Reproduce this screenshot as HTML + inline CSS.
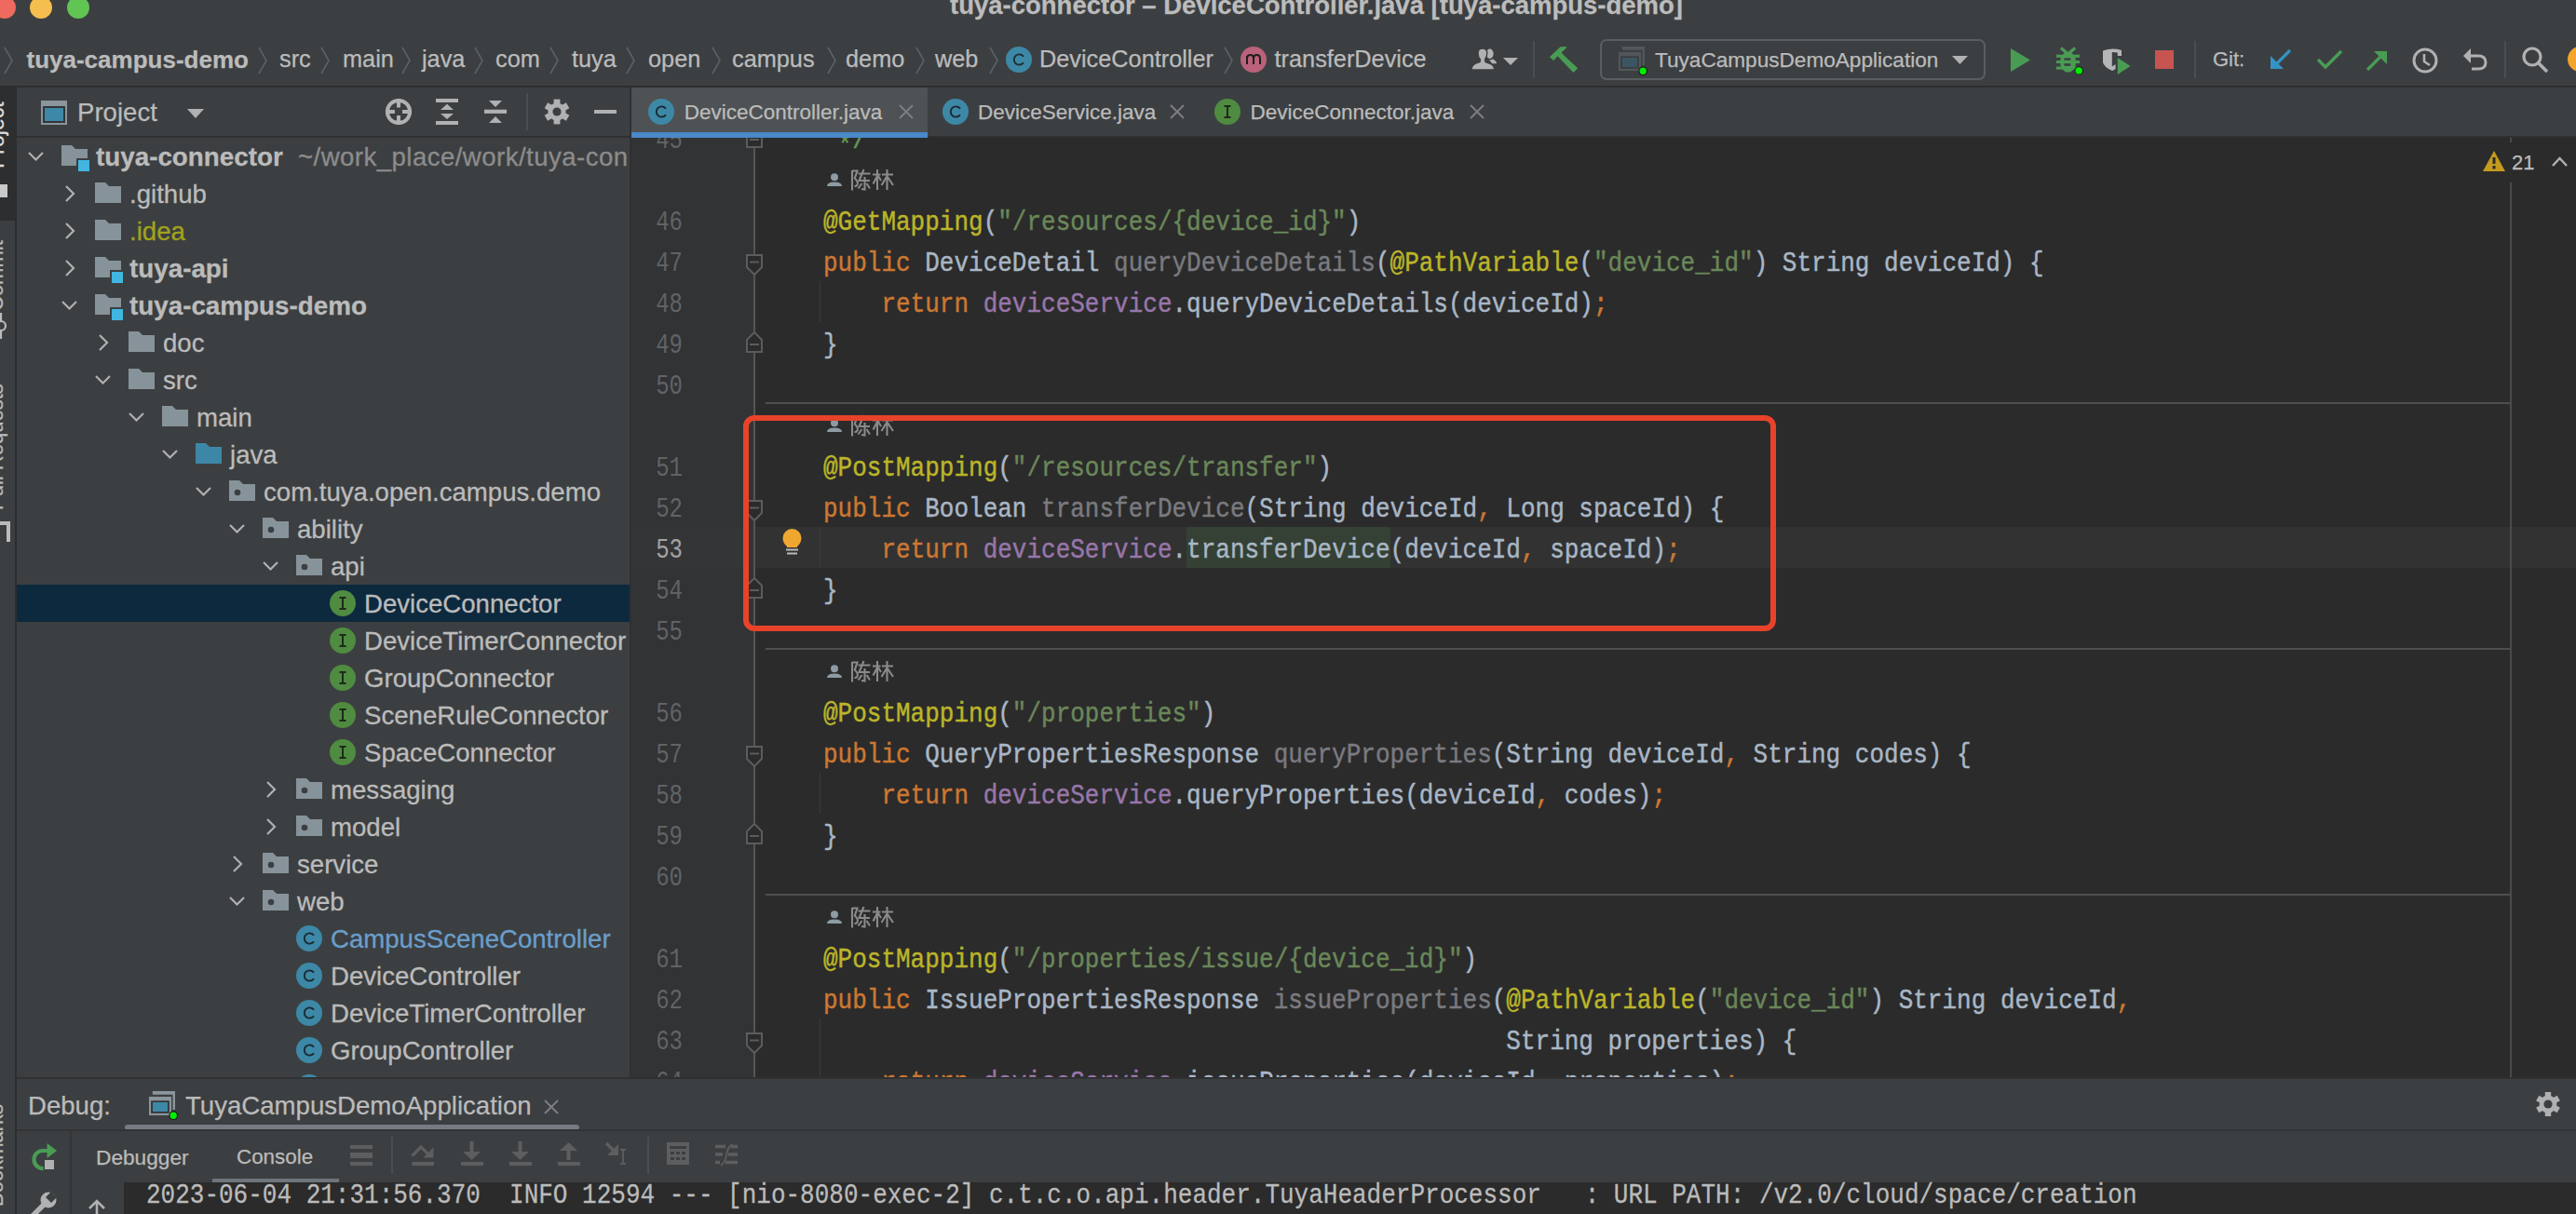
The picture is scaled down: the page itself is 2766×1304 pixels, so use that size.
<!DOCTYPE html><html><head><meta charset="utf-8"><title>IDE</title><style>
*{margin:0;padding:0;box-sizing:border-box}
html,body{width:2766px;height:1304px;overflow:hidden;background:#3c3f41}
body{position:relative;font-family:"Liberation Sans",sans-serif;color:#bbbbbb}
.ab{position:absolute}
.t{position:absolute;white-space:pre;line-height:1;-webkit-text-stroke:0.25px currentColor}
.mono{font-family:"Liberation Mono",monospace}
svg{position:absolute;overflow:visible}
.row{position:absolute;left:0;height:44px;line-height:44px;white-space:pre;font-family:"Liberation Mono",monospace;font-size:26px;color:#a9b7c6;transform:scaleY(1.12);transform-origin:0 12px;-webkit-text-stroke:0.4px currentColor}
.k{color:#cc7832}.s{color:#6a8759}.an{color:#bbb529}.f{color:#9876aa}.u{color:#7a7a80}.cm{color:#629755}
.ln{position:absolute;left:677px;width:55px;text-align:right;font-family:"Liberation Mono",monospace;font-size:24px;color:#606366;height:44px;line-height:44px;transform:scaleY(1.2);transform-origin:0 12px}
.tr{position:absolute;height:40px;line-height:40px;white-space:pre;font-size:27.6px;color:#bbbbbb;-webkit-text-stroke:0.3px currentColor}
</style></head><body>
<div class="ab" style="left:0;top:0;width:2766px;height:92px;background:#3c3f41"></div>
<div class="ab" style="left:-7px;top:-4px;width:24px;height:24px;border-radius:50%;background:#ee6a5f"></div>
<div class="ab" style="left:32px;top:-4px;width:24px;height:24px;border-radius:50%;background:#f5be4f"></div>
<div class="ab" style="left:72px;top:-4px;width:24px;height:24px;border-radius:50%;background:#61c554"></div>
<div class="t" style="left:1020px;top:-8px;font-size:27.5px;font-weight:bold;color:#bcbcbc">tuya-connector – DeviceController.java [tuya-campus-demo]</div>
<div class="ab" style="left:0;top:92px;width:2766px;height:2px;background:#2c2d2f"></div>
<svg style="left:4px;top:50px" width="10" height="30"><path d="M1 1 L9 15 L1 29" fill="none" stroke="#5b6166" stroke-width="1.6"/></svg>
<div class="t" style="left:28.5px;top:51px;font-size:26px;font-weight:bold;color:#bbbbbb">tuya-campus-demo</div>
<svg style="left:277px;top:50px" width="10" height="30"><path d="M1 1 L9 15 L1 29" fill="none" stroke="#5b6166" stroke-width="1.6"/></svg>
<div class="t" style="left:300px;top:51px;font-size:25.3px;color:#bbbbbb">src</div>
<svg style="left:344px;top:50px" width="10" height="30"><path d="M1 1 L9 15 L1 29" fill="none" stroke="#5b6166" stroke-width="1.6"/></svg>
<div class="t" style="left:368px;top:51px;font-size:25.3px;color:#bbbbbb">main</div>
<svg style="left:431px;top:50px" width="10" height="30"><path d="M1 1 L9 15 L1 29" fill="none" stroke="#5b6166" stroke-width="1.6"/></svg>
<div class="t" style="left:453px;top:51px;font-size:25.3px;color:#bbbbbb">java</div>
<svg style="left:509px;top:50px" width="10" height="30"><path d="M1 1 L9 15 L1 29" fill="none" stroke="#5b6166" stroke-width="1.6"/></svg>
<div class="t" style="left:532px;top:51px;font-size:25.3px;color:#bbbbbb">com</div>
<svg style="left:590px;top:50px" width="10" height="30"><path d="M1 1 L9 15 L1 29" fill="none" stroke="#5b6166" stroke-width="1.6"/></svg>
<div class="t" style="left:614px;top:51px;font-size:25.3px;color:#bbbbbb">tuya</div>
<svg style="left:672px;top:50px" width="10" height="30"><path d="M1 1 L9 15 L1 29" fill="none" stroke="#5b6166" stroke-width="1.6"/></svg>
<div class="t" style="left:696px;top:51px;font-size:25.3px;color:#bbbbbb">open</div>
<svg style="left:764px;top:50px" width="10" height="30"><path d="M1 1 L9 15 L1 29" fill="none" stroke="#5b6166" stroke-width="1.6"/></svg>
<div class="t" style="left:786px;top:51px;font-size:25.3px;color:#bbbbbb">campus</div>
<svg style="left:888px;top:50px" width="10" height="30"><path d="M1 1 L9 15 L1 29" fill="none" stroke="#5b6166" stroke-width="1.6"/></svg>
<div class="t" style="left:908px;top:51px;font-size:25.3px;color:#bbbbbb">demo</div>
<svg style="left:983px;top:50px" width="10" height="30"><path d="M1 1 L9 15 L1 29" fill="none" stroke="#5b6166" stroke-width="1.6"/></svg>
<div class="t" style="left:1004px;top:51px;font-size:25.3px;color:#bbbbbb">web</div>
<svg style="left:1062px;top:50px" width="10" height="30"><path d="M1 1 L9 15 L1 29" fill="none" stroke="#5b6166" stroke-width="1.6"/></svg>
<svg style="left:1079.5px;top:50px" width="28" height="28"><circle cx="14" cy="14" r="14" fill="#3d88a6"/>
<path d="M19 10.8 A5.6 5.6 0 1 0 19 17.2" fill="none" stroke="#1f2f37" stroke-width="1.9"/>
</svg>
<div class="t" style="left:1116px;top:51px;font-size:25.3px;color:#bbbbbb">DeviceController</div>
<svg style="left:1314px;top:50px" width="10" height="30"><path d="M1 1 L9 15 L1 29" fill="none" stroke="#5b6166" stroke-width="1.6"/></svg>
<svg style="left:1332px;top:50px" width="28" height="28"><circle cx="14" cy="14" r="14" fill="#b9627a"/>
<path d="M7 19 V10 M7 13 Q7 9 10.5 9 Q14 9 14 13 V19 M14 13 Q14 9 17.5 9 Q21 9 21 13 V19" fill="none" stroke="#1e1e1e" stroke-width="2"/>
</svg>
<div class="t" style="left:1368.6px;top:51px;font-size:25.3px;color:#bbbbbb">transferDevice</div>
<svg style="left:1570px;top:40px" width="70" height="50"><path d="M26.5 22.5 C31 21 37.5 23.5 38 29 L32 29Z" fill="#afb1b3" stroke="#3c3f41" stroke-width="1.4"/><ellipse cx="29.7" cy="17.8" rx="4.6" ry="6" fill="#afb1b3" stroke="#3c3f41" stroke-width="1.4"/><path d="M10 35 C10 29.5 14 28 19 26.5 L19.5 24 C17.5 22 17 20 17 17 C17 13.5 19 12 21.8 12 C24.6 12 26.8 13.5 26.8 17 C26.8 20 26 22 24.5 24 L25 26.5 C30 28 34.7 29.5 34.7 35Z" fill="#afb1b3" stroke="#3c3f41" stroke-width="1.4"/><path d="M44 22 H60 L52 30Z" fill="#afb1b3"/></svg>
<div class="ab" style="left:1646px;top:44px;width:2px;height:40px;background:#4b4e50"></div>
<svg style="left:1660px;top:46px" width="40" height="36"><path d="M3.9 15.2 L15.5 4.3 L22 4.1 L21.8 5.6 L16.5 10.4 L23 17 L34.2 27.3 L29.4 31.9 L12.5 14.2 L8.2 19 Z" fill="#499c54"/></svg>
<div class="ab" style="left:1718px;top:42px;width:414px;height:44px;border:2px solid #5b5e60;border-radius:7px"></div>
<svg style="left:1736px;top:48px" width="36" height="36"><g transform="translate(2 8)"><path d="M3.8 -6 H28 V14 H25.4 V-2.2 H3.8Z" fill="#52575b"/><rect x="-1.2" y="-1.2" width="26.4" height="22.4" fill="#3c3f41"/><rect x="0" y="0" width="24" height="20" fill="#52575b"/><rect x="2.1" y="4.3" width="19.7" height="13.5" fill="#3a3d3f"/><rect x="4" y="6" width="16" height="10" fill="#3c5563"/><circle cx="26.2" cy="20.2" r="4.3" fill="#00ee00" stroke="#1e1e1e" stroke-width="1.2"/></g></svg>
<div class="t" style="left:1777px;top:53.5px;font-size:22.6px;color:#bbbbbb">TuyaCampusDemoApplication</div>
<svg style="left:2096px;top:60px" width="17" height="10"><path d="M0 0 H17 L8.5 9Z" fill="#afb1b3"/></svg>
<svg style="left:2159px;top:52px" width="22" height="25"><path d="M0 0 L21 12.5 L0 25Z" fill="#499c54"/></svg>
<svg style="left:2205px;top:48px" width="34" height="34"><path d="M8 3.5 L15.6 10 M23.2 3.5 L15.6 10" stroke="#499c54" stroke-width="3.2"/><rect x="3" y="10.7" width="25" height="3.1" fill="#499c54"/><rect x="3" y="17.1" width="25" height="2.9" fill="#499c54"/><rect x="3" y="23.5" width="25" height="3.1" fill="#499c54"/><ellipse cx="15.6" cy="18.7" rx="8.5" ry="11" fill="#499c54"/><rect x="11.4" y="14.3" width="7" height="2.5" fill="#3c3f41"/><rect x="11.4" y="20.2" width="7" height="2.6" fill="#3c3f41"/><circle cx="27.2" cy="27.9" r="4.3" fill="#00ee00" stroke="#222" stroke-width="1.2"/></svg>
<svg style="left:2255px;top:48px" width="36" height="34"><path d="M3 6.5 Q13 3 23 6 L23 12 L18.8 12 L18.8 8.5 L12.8 8 L12.8 23.5 L16.5 21 L16.5 26.2 L13 28 Q4 24 3 19 Z" fill="#b4b6b8"/><path d="M18.8 14 L32.5 23 L18.8 32Z" fill="#499c54"/></svg>
<div class="ab" style="left:2314px;top:54px;width:20px;height:20px;background:#c75450"></div>
<div class="ab" style="left:2356px;top:44px;width:2px;height:40px;background:#4b4e50"></div>
<div class="t" style="left:2376px;top:53px;font-size:22px;color:#bbbbbb">Git:</div>
<svg style="left:2436px;top:52px" width="26" height="24"><path d="M23 2 L5 20" stroke="#3592c4" stroke-width="3.2"/><path d="M2 8 L2 22 L16 22Z" fill="#3592c4"/></svg>
<svg style="left:2487px;top:53px" width="30" height="22"><path d="M2 11 L10 19 L27 2" fill="none" stroke="#499c54" stroke-width="3.5"/></svg>
<svg style="left:2539px;top:53px" width="26" height="24"><path d="M3 22 L21 4" stroke="#499c54" stroke-width="3.2"/><path d="M10 2 L24 2 L24 16Z" fill="#499c54"/></svg>
<svg style="left:2590px;top:51px" width="30" height="30"><circle cx="14" cy="14" r="12" fill="none" stroke="#afb1b3" stroke-width="3"/><path d="M13 7 V15 L19 19" fill="none" stroke="#afb1b3" stroke-width="2.6"/></svg>
<svg style="left:2644px;top:50px" width="28" height="28"><path d="M4 10 H17 Q25 10 25 17 Q25 24 17 24 H10" fill="none" stroke="#afb1b3" stroke-width="3"/><path d="M1 10 L9 2 L9 18Z" fill="#afb1b3"/></svg>
<div class="ab" style="left:2689px;top:44px;width:2px;height:40px;background:#4b4e50"></div>
<svg style="left:2708px;top:50px" width="30" height="30"><circle cx="11" cy="11" r="9" fill="none" stroke="#afb1b3" stroke-width="3.2"/><path d="M18 18 L27 27" stroke="#afb1b3" stroke-width="3.6"/></svg>
<div class="ab" style="left:2757px;top:50px;width:27px;height:27px;border-radius:50%;background:#f4a42b"></div>
<div class="ab" style="left:0;top:94px;width:16px;height:1210px;background:#3c3f41"></div>
<div class="ab" style="left:0;top:94px;width:16px;height:143px;background:#2d2e30"></div>
<div class="ab" style="left:16px;top:94px;width:2px;height:1210px;background:#2c2d2f"></div>
<div class="t" style="left:-15px;top:181px;font-size:23px;color:#dddddd;transform-origin:0 0;transform:rotate(-90deg)">Project</div>
<div class="ab" style="left:0;top:198px;width:8px;height:14px;background:#c9c9c9"></div>
<div class="t" style="left:-15px;top:334px;font-size:22px;color:#bbbbbb;transform-origin:0 0;transform:rotate(-90deg)">Commit</div>
<svg style="left:-4px;top:336px" width="14" height="28"><circle cx="5" cy="14" r="5" fill="none" stroke="#bbbbbb" stroke-width="2.2"/><path d="M5 0 V9 M5 19 V28" stroke="#bbbbbb" stroke-width="2.2"/></svg>
<div class="t" style="left:-15px;top:548px;font-size:22px;color:#bbbbbb;transform-origin:0 0;transform:rotate(-90deg)">Pull Requests</div>
<svg style="left:0;top:560px" width="12" height="24"><path d="M0 2 H9 V22" fill="none" stroke="#bbbbbb" stroke-width="4"/></svg>
<div class="t" style="left:-15px;top:1296px;font-size:22px;color:#bbbbbb;transform-origin:0 0;transform:rotate(-90deg)">Bookmarks</div>
<div class="ab" style="left:18px;top:94px;width:658px;height:1064px;background:#3c3f41"></div>
<div class="ab" style="left:18px;top:146px;width:658px;height:2px;background:#2f3032"></div>
<div class="ab" style="left:676px;top:94px;width:2px;height:1064px;background:#2f3032"></div>
<svg style="left:44px;top:108px" width="28" height="26"><rect x="0" y="0" width="28" height="26" fill="#8a959c"/><rect x="2" y="6" width="24" height="18" fill="#333537"/><rect x="4" y="8" width="20" height="14" fill="#3d88a6"/></svg>
<div class="t" style="left:83px;top:107px;font-size:27.6px;color:#bbbbbb">Project</div>
<svg style="left:201px;top:117px" width="18" height="11"><path d="M0 0 H18 L9 10Z" fill="#afb1b3"/></svg>
<svg style="left:413px;top:105px" width="30" height="30"><circle cx="15" cy="15" r="12.1" fill="none" stroke="#afb1b3" stroke-width="4"/><path d="M15 1 V10.6 M15 19.1 V29 M1 15 H10.9 M19 15 H29" stroke="#afb1b3" stroke-width="4"/></svg>
<svg style="left:468px;top:105px" width="26" height="30"><rect x="0" y="1" width="24" height="4" fill="#afb1b3"/><rect x="0" y="25" width="24" height="4" fill="#afb1b3"/><path d="M12 6.8 L19 13 H5Z M12 23 L19 17 H5Z" fill="#afb1b3"/></svg>
<svg style="left:520px;top:105px" width="26" height="30"><rect x="0" y="12.7" width="24" height="4.2" fill="#afb1b3"/><path d="M5 3 H19 L12 10Z M5 27 H19 L12 20Z" fill="#afb1b3"/></svg>
<div class="ab" style="left:565px;top:100px;width:2px;height:40px;background:#4b4e50"></div>
<svg style="left:584px;top:106px" width="28" height="28"><g transform="translate(14 14)"><circle r="9.6" fill="#afb1b3"/><rect x="-3.4" y="-13.4" width="6.8" height="6" fill="#afb1b3" transform="rotate(0)"/><rect x="-3.4" y="-13.4" width="6.8" height="6" fill="#afb1b3" transform="rotate(60)"/><rect x="-3.4" y="-13.4" width="6.8" height="6" fill="#afb1b3" transform="rotate(120)"/><rect x="-3.4" y="-13.4" width="6.8" height="6" fill="#afb1b3" transform="rotate(180)"/><rect x="-3.4" y="-13.4" width="6.8" height="6" fill="#afb1b3" transform="rotate(240)"/><rect x="-3.4" y="-13.4" width="6.8" height="6" fill="#afb1b3" transform="rotate(300)"/><circle r="4.6" fill="#3c3f41"/></g></svg>
<div class="ab" style="left:638px;top:118px;width:24px;height:4px;background:#afb1b3"></div>
<div class="ab" style="left:18px;top:148px;width:658px;height:1010px;overflow:hidden">
<svg style="left:12px;top:15px" width="18" height="10"><path d="M1 1 L8.5 8.5 L16 1" fill="none" stroke="#afb1b3" stroke-width="2.2"/></svg>
<svg style="left:48px;top:8px" width="34" height="26"><path d="M0 0 H11 L15 4 H28 V22 H0Z" fill="#87939a"/><rect x="16" y="14" width="13" height="13" fill="#3c3f41"/><rect x="18" y="16" width="12" height="12" fill="#40b6e0"/></svg>
<div class="tr" style="left:85px;top:0.5px;color:#bbbbbb;font-weight:bold;font-size:27.8px;">tuya-connector</div>
<div class="tr" style="left:302px;top:0.5px;color:#8c8c8c;letter-spacing:0.45px">~/work_place/work/tuya-connector</div>
<svg style="left:52px;top:51px" width="11" height="18"><path d="M1 1 L9 9 L1 17" fill="none" stroke="#afb1b3" stroke-width="2.2"/></svg>
<svg style="left:84px;top:48px" width="34" height="26"><path d="M0 0 H11 L15 4 H28 V22 H0Z" fill="#87939a"/></svg>
<div class="tr" style="left:121px;top:40.5px;color:#bbbbbb;">.github</div>
<svg style="left:52px;top:91px" width="11" height="18"><path d="M1 1 L9 9 L1 17" fill="none" stroke="#afb1b3" stroke-width="2.2"/></svg>
<svg style="left:84px;top:88px" width="34" height="26"><path d="M0 0 H11 L15 4 H28 V22 H0Z" fill="#87939a"/></svg>
<div class="tr" style="left:121px;top:80.5px;color:#a2a21c;">.idea</div>
<svg style="left:52px;top:131px" width="11" height="18"><path d="M1 1 L9 9 L1 17" fill="none" stroke="#afb1b3" stroke-width="2.2"/></svg>
<svg style="left:84px;top:128px" width="34" height="26"><path d="M0 0 H11 L15 4 H28 V22 H0Z" fill="#87939a"/><rect x="16" y="14" width="13" height="13" fill="#3c3f41"/><rect x="18" y="16" width="12" height="12" fill="#40b6e0"/></svg>
<div class="tr" style="left:121px;top:120.5px;color:#bbbbbb;font-weight:bold;font-size:27.8px;">tuya-api</div>
<svg style="left:48px;top:175px" width="18" height="10"><path d="M1 1 L8.5 8.5 L16 1" fill="none" stroke="#afb1b3" stroke-width="2.2"/></svg>
<svg style="left:84px;top:168px" width="34" height="26"><path d="M0 0 H11 L15 4 H28 V22 H0Z" fill="#87939a"/><rect x="16" y="14" width="13" height="13" fill="#3c3f41"/><rect x="18" y="16" width="12" height="12" fill="#40b6e0"/></svg>
<div class="tr" style="left:121px;top:160.5px;color:#bbbbbb;font-weight:bold;font-size:27.8px;">tuya-campus-demo</div>
<svg style="left:88px;top:211px" width="11" height="18"><path d="M1 1 L9 9 L1 17" fill="none" stroke="#afb1b3" stroke-width="2.2"/></svg>
<svg style="left:120px;top:208px" width="34" height="26"><path d="M0 0 H11 L15 4 H28 V22 H0Z" fill="#87939a"/></svg>
<div class="tr" style="left:157px;top:200.5px;color:#bbbbbb;">doc</div>
<svg style="left:84px;top:255px" width="18" height="10"><path d="M1 1 L8.5 8.5 L16 1" fill="none" stroke="#afb1b3" stroke-width="2.2"/></svg>
<svg style="left:120px;top:248px" width="34" height="26"><path d="M0 0 H11 L15 4 H28 V22 H0Z" fill="#87939a"/></svg>
<div class="tr" style="left:157px;top:240.5px;color:#bbbbbb;">src</div>
<svg style="left:120px;top:295px" width="18" height="10"><path d="M1 1 L8.5 8.5 L16 1" fill="none" stroke="#afb1b3" stroke-width="2.2"/></svg>
<svg style="left:156px;top:288px" width="34" height="26"><path d="M0 0 H11 L15 4 H28 V22 H0Z" fill="#87939a"/></svg>
<div class="tr" style="left:193px;top:280.5px;color:#bbbbbb;">main</div>
<svg style="left:156px;top:335px" width="18" height="10"><path d="M1 1 L8.5 8.5 L16 1" fill="none" stroke="#afb1b3" stroke-width="2.2"/></svg>
<svg style="left:192px;top:328px" width="34" height="26"><path d="M0 0 H11 L15 4 H28 V22 H0Z" fill="#3d87a6"/></svg>
<div class="tr" style="left:229px;top:320.5px;color:#bbbbbb;">java</div>
<svg style="left:192px;top:375px" width="18" height="10"><path d="M1 1 L8.5 8.5 L16 1" fill="none" stroke="#afb1b3" stroke-width="2.2"/></svg>
<svg style="left:228px;top:368px" width="34" height="26"><path d="M0 0 H11 L15 4 H28 V22 H0Z" fill="#87939a"/><circle cx="9" cy="13" r="3.3" fill="#3c3f41"/></svg>
<div class="tr" style="left:265px;top:360.5px;color:#bbbbbb;">com.tuya.open.campus.demo</div>
<svg style="left:228px;top:415px" width="18" height="10"><path d="M1 1 L8.5 8.5 L16 1" fill="none" stroke="#afb1b3" stroke-width="2.2"/></svg>
<svg style="left:264px;top:408px" width="34" height="26"><path d="M0 0 H11 L15 4 H28 V22 H0Z" fill="#87939a"/><circle cx="9" cy="13" r="3.3" fill="#3c3f41"/></svg>
<div class="tr" style="left:301px;top:400.5px;color:#bbbbbb;">ability</div>
<svg style="left:264px;top:455px" width="18" height="10"><path d="M1 1 L8.5 8.5 L16 1" fill="none" stroke="#afb1b3" stroke-width="2.2"/></svg>
<svg style="left:300px;top:448px" width="34" height="26"><path d="M0 0 H11 L15 4 H28 V22 H0Z" fill="#87939a"/><circle cx="9" cy="13" r="3.3" fill="#3c3f41"/></svg>
<div class="tr" style="left:337px;top:440.5px;color:#bbbbbb;">api</div>
<div class="ab" style="left:0;top:480px;width:658px;height:40px;background:#0d293e"></div>
<svg style="left:336px;top:486px" width="28" height="28"><circle cx="14" cy="14" r="14" fill="#4f8b40"/>
<path d="M10.5 8 H17.5 M14 8 V20 M10.5 20 H17.5" fill="none" stroke="#1e2a1a" stroke-width="2"/>
</svg>
<div class="tr" style="left:373px;top:480.5px;color:#bbbbbb;">DeviceConnector</div>
<svg style="left:336px;top:526px" width="28" height="28"><circle cx="14" cy="14" r="14" fill="#4f8b40"/>
<path d="M10.5 8 H17.5 M14 8 V20 M10.5 20 H17.5" fill="none" stroke="#1e2a1a" stroke-width="2"/>
</svg>
<div class="tr" style="left:373px;top:520.5px;color:#bbbbbb;">DeviceTimerConnector</div>
<svg style="left:336px;top:566px" width="28" height="28"><circle cx="14" cy="14" r="14" fill="#4f8b40"/>
<path d="M10.5 8 H17.5 M14 8 V20 M10.5 20 H17.5" fill="none" stroke="#1e2a1a" stroke-width="2"/>
</svg>
<div class="tr" style="left:373px;top:560.5px;color:#bbbbbb;">GroupConnector</div>
<svg style="left:336px;top:606px" width="28" height="28"><circle cx="14" cy="14" r="14" fill="#4f8b40"/>
<path d="M10.5 8 H17.5 M14 8 V20 M10.5 20 H17.5" fill="none" stroke="#1e2a1a" stroke-width="2"/>
</svg>
<div class="tr" style="left:373px;top:600.5px;color:#bbbbbb;">SceneRuleConnector</div>
<svg style="left:336px;top:646px" width="28" height="28"><circle cx="14" cy="14" r="14" fill="#4f8b40"/>
<path d="M10.5 8 H17.5 M14 8 V20 M10.5 20 H17.5" fill="none" stroke="#1e2a1a" stroke-width="2"/>
</svg>
<div class="tr" style="left:373px;top:640.5px;color:#bbbbbb;">SpaceConnector</div>
<svg style="left:268px;top:691px" width="11" height="18"><path d="M1 1 L9 9 L1 17" fill="none" stroke="#afb1b3" stroke-width="2.2"/></svg>
<svg style="left:300px;top:688px" width="34" height="26"><path d="M0 0 H11 L15 4 H28 V22 H0Z" fill="#87939a"/><circle cx="9" cy="13" r="3.3" fill="#3c3f41"/></svg>
<div class="tr" style="left:337px;top:680.5px;color:#bbbbbb;">messaging</div>
<svg style="left:268px;top:731px" width="11" height="18"><path d="M1 1 L9 9 L1 17" fill="none" stroke="#afb1b3" stroke-width="2.2"/></svg>
<svg style="left:300px;top:728px" width="34" height="26"><path d="M0 0 H11 L15 4 H28 V22 H0Z" fill="#87939a"/><circle cx="9" cy="13" r="3.3" fill="#3c3f41"/></svg>
<div class="tr" style="left:337px;top:720.5px;color:#bbbbbb;">model</div>
<svg style="left:232px;top:771px" width="11" height="18"><path d="M1 1 L9 9 L1 17" fill="none" stroke="#afb1b3" stroke-width="2.2"/></svg>
<svg style="left:264px;top:768px" width="34" height="26"><path d="M0 0 H11 L15 4 H28 V22 H0Z" fill="#87939a"/><circle cx="9" cy="13" r="3.3" fill="#3c3f41"/></svg>
<div class="tr" style="left:301px;top:760.5px;color:#bbbbbb;">service</div>
<svg style="left:228px;top:815px" width="18" height="10"><path d="M1 1 L8.5 8.5 L16 1" fill="none" stroke="#afb1b3" stroke-width="2.2"/></svg>
<svg style="left:264px;top:808px" width="34" height="26"><path d="M0 0 H11 L15 4 H28 V22 H0Z" fill="#87939a"/><circle cx="9" cy="13" r="3.3" fill="#3c3f41"/></svg>
<div class="tr" style="left:301px;top:800.5px;color:#bbbbbb;">web</div>
<svg style="left:300px;top:846px" width="28" height="28"><circle cx="14" cy="14" r="14" fill="#3d88a6"/>
<path d="M19 10.8 A5.6 5.6 0 1 0 19 17.2" fill="none" stroke="#1a2a33" stroke-width="1.9"/>
</svg>
<div class="tr" style="left:337px;top:840.5px;color:#6a9ecb;">CampusSceneController</div>
<svg style="left:300px;top:886px" width="28" height="28"><circle cx="14" cy="14" r="14" fill="#3d88a6"/>
<path d="M19 10.8 A5.6 5.6 0 1 0 19 17.2" fill="none" stroke="#1a2a33" stroke-width="1.9"/>
</svg>
<div class="tr" style="left:337px;top:880.5px;color:#bbbbbb;">DeviceController</div>
<svg style="left:300px;top:926px" width="28" height="28"><circle cx="14" cy="14" r="14" fill="#3d88a6"/>
<path d="M19 10.8 A5.6 5.6 0 1 0 19 17.2" fill="none" stroke="#1a2a33" stroke-width="1.9"/>
</svg>
<div class="tr" style="left:337px;top:920.5px;color:#bbbbbb;">DeviceTimerController</div>
<svg style="left:300px;top:966px" width="28" height="28"><circle cx="14" cy="14" r="14" fill="#3d88a6"/>
<path d="M19 10.8 A5.6 5.6 0 1 0 19 17.2" fill="none" stroke="#1a2a33" stroke-width="1.9"/>
</svg>
<div class="tr" style="left:337px;top:960.5px;color:#bbbbbb;">GroupController</div>
<svg style="left:300px;top:1006px" width="28" height="28"><circle cx="14" cy="14" r="14" fill="#3d88a6"/>
<path d="M19 10.8 A5.6 5.6 0 1 0 19 17.2" fill="none" stroke="#1a2a33" stroke-width="1.9"/>
</svg>
<div class="tr" style="left:337px;top:1000.5px;color:#bbbbbb;">DeviceLinkController</div>
</div>
<div class="ab" style="left:678px;top:94px;width:2088px;height:52px;background:#3c3f41"></div>
<div class="ab" style="left:678px;top:146px;width:2088px;height:2px;background:#2f3032"></div>
<div class="ab" style="left:678px;top:94px;width:318px;height:48px;background:#4e5254"></div>
<div class="ab" style="left:678px;top:142px;width:318px;height:6px;background:#4a88c7"></div>
<svg style="left:696px;top:106px" width="28" height="28"><circle cx="14" cy="14" r="14" fill="#3d88a6"/>
<path d="M19 10.8 A5.6 5.6 0 1 0 19 17.2" fill="none" stroke="#1a2a33" stroke-width="1.9"/>
</svg>
<div class="t" style="left:734.7px;top:109.5px;font-size:22.5px;color:#bbbbbb">DeviceController.java</div>
<svg style="left:965px;top:112px" width="16" height="16"><path d="M1 1 L15 15 M15 1 L1 15" stroke="#7d8083" stroke-width="1.8"/></svg>
<svg style="left:1011.8px;top:106px" width="28" height="28"><circle cx="14" cy="14" r="14" fill="#3d88a6"/>
<path d="M19 10.8 A5.6 5.6 0 1 0 19 17.2" fill="none" stroke="#1a2a33" stroke-width="1.9"/>
</svg>
<div class="t" style="left:1050px;top:109.5px;font-size:22.5px;color:#bbbbbb">DeviceService.java</div>
<svg style="left:1256px;top:112px" width="16" height="16"><path d="M1 1 L15 15 M15 1 L1 15" stroke="#7d8083" stroke-width="1.8"/></svg>
<svg style="left:1304px;top:106px" width="28" height="28"><circle cx="14" cy="14" r="14" fill="#4f8b40"/>
<path d="M10.5 8 H17.5 M14 8 V20 M10.5 20 H17.5" fill="none" stroke="#1e2a1a" stroke-width="2"/>
</svg>
<div class="t" style="left:1342.5px;top:109.5px;font-size:22.5px;color:#bbbbbb">DeviceConnector.java</div>
<svg style="left:1578px;top:112px" width="16" height="16"><path d="M1 1 L15 15 M15 1 L1 15" stroke="#7d8083" stroke-width="1.8"/></svg>
<div class="ab" style="left:678px;top:148px;width:2088px;height:1010px;background:#2b2b2b;overflow:hidden">
<div class="ab" style="left:0;top:0;width:131px;height:1010px;background:#313335"></div>
<div class="ab" style="left:131px;top:0;width:2px;height:1010px;background:#555555"></div>
<div class="ab" style="left:0;top:418px;width:131px;height:44px;background:#343537"></div>
<div class="ab" style="left:133px;top:418px;width:2100px;height:44px;background:#323232"></div>
<div class="ab" style="left:596px;top:418px;width:219px;height:44px;background:#344134"></div>
<div class="ln" style="left:0;top:-20px;color:#606366">45</div>
<div class="row" style="left:206px;top:-20px"> <span class="cm" style="position:relative;top:5px">*</span><span class="cm">/</span></div>
<svg style="left:210px;top:22px" width="16" height="32"><circle cx="8" cy="20.3" r="4" fill="#8e9ba3"/><path d="M0 30 Q0 25.5 8 25.5 Q16 25.5 16 30Z" fill="#8e9ba3"/></svg>
<svg style="left:235px;top:22px" width="48" height="40" fill="none" stroke="#8a8a8a" stroke-width="2.1" stroke-linecap="butt"><path d="M2 13 V34.5 M2 13.5 H7.5 L4.8 21.5 Q8.5 25 7.8 27.8 Q7 30 4.5 30"/><path d="M8.5 16.5 H21.5 M14.5 12 L9.5 24 H21 M15.5 20 V33.5 L12 33 M12.5 27 L8.5 32.5 M17.5 27 L21 32.5"/><path d="M29 12 V34 M24 17.5 H32.5 M29 19 L24.5 27.5 M30 19 L33 24"/><path d="M39.5 12 V34 M34 17.5 H46 M39 20 L33.5 29 M40 20 L46 29"/></svg>
<div class="ln" style="left:0;top:68px;color:#606366">46</div>
<div class="row" style="left:206px;top:68px"><span class="an">@GetMapping</span>(<span class="s">&quot;/resources/{device_id}&quot;</span>)</div>
<div class="ln" style="left:0;top:112px;color:#606366">47</div>
<div class="row" style="left:206px;top:112px"><span class="k">public</span> DeviceDetail <span class="u">queryDeviceDetails</span>(<span class="an">@PathVariable</span>(<span class="s">&quot;device_id&quot;</span>) String deviceId) {</div>
<div class="ln" style="left:0;top:156px;color:#606366">48</div>
<div class="row" style="left:206px;top:156px">    <span class="k">return</span> <span class="f">deviceService</span>.queryDeviceDetails(deviceId)<span class="k">;</span></div>
<div class="ln" style="left:0;top:200px;color:#606366">49</div>
<div class="row" style="left:206px;top:200px">}</div>
<div class="ln" style="left:0;top:244px;color:#606366">50</div>
<div class="row" style="left:206px;top:244px"></div>
<svg style="left:210px;top:286px" width="16" height="32"><circle cx="8" cy="20.3" r="4" fill="#8e9ba3"/><path d="M0 30 Q0 25.5 8 25.5 Q16 25.5 16 30Z" fill="#8e9ba3"/></svg>
<svg style="left:235px;top:286px" width="48" height="40" fill="none" stroke="#8a8a8a" stroke-width="2.1" stroke-linecap="butt"><path d="M2 13 V34.5 M2 13.5 H7.5 L4.8 21.5 Q8.5 25 7.8 27.8 Q7 30 4.5 30"/><path d="M8.5 16.5 H21.5 M14.5 12 L9.5 24 H21 M15.5 20 V33.5 L12 33 M12.5 27 L8.5 32.5 M17.5 27 L21 32.5"/><path d="M29 12 V34 M24 17.5 H32.5 M29 19 L24.5 27.5 M30 19 L33 24"/><path d="M39.5 12 V34 M34 17.5 H46 M39 20 L33.5 29 M40 20 L46 29"/></svg>
<div class="ab" style="left:144px;top:284px;width:1873px;height:2px;background:#4f4f4f"></div>
<div class="ln" style="left:0;top:332px;color:#606366">51</div>
<div class="row" style="left:206px;top:332px"><span class="an">@PostMapping</span>(<span class="s">&quot;/resources/transfer&quot;</span>)</div>
<div class="ln" style="left:0;top:376px;color:#606366">52</div>
<div class="row" style="left:206px;top:376px"><span class="k">public</span> Boolean <span class="u">transferDevice</span>(String deviceId<span class="k">,</span> Long spaceId) {</div>
<div class="ln" style="left:0;top:420px;color:#a4a3a3">53</div>
<div class="row" style="left:206px;top:420px">    <span class="k">return</span> <span class="f">deviceService</span>.transferDevice(deviceId<span class="k">,</span> spaceId)<span class="k">;</span></div>
<div class="ln" style="left:0;top:464px;color:#606366">54</div>
<div class="row" style="left:206px;top:464px">}</div>
<div class="ln" style="left:0;top:508px;color:#606366">55</div>
<div class="row" style="left:206px;top:508px"></div>
<svg style="left:210px;top:550px" width="16" height="32"><circle cx="8" cy="20.3" r="4" fill="#8e9ba3"/><path d="M0 30 Q0 25.5 8 25.5 Q16 25.5 16 30Z" fill="#8e9ba3"/></svg>
<svg style="left:235px;top:550px" width="48" height="40" fill="none" stroke="#8a8a8a" stroke-width="2.1" stroke-linecap="butt"><path d="M2 13 V34.5 M2 13.5 H7.5 L4.8 21.5 Q8.5 25 7.8 27.8 Q7 30 4.5 30"/><path d="M8.5 16.5 H21.5 M14.5 12 L9.5 24 H21 M15.5 20 V33.5 L12 33 M12.5 27 L8.5 32.5 M17.5 27 L21 32.5"/><path d="M29 12 V34 M24 17.5 H32.5 M29 19 L24.5 27.5 M30 19 L33 24"/><path d="M39.5 12 V34 M34 17.5 H46 M39 20 L33.5 29 M40 20 L46 29"/></svg>
<div class="ab" style="left:144px;top:548px;width:1873px;height:2px;background:#4f4f4f"></div>
<div class="ln" style="left:0;top:596px;color:#606366">56</div>
<div class="row" style="left:206px;top:596px"><span class="an">@PostMapping</span>(<span class="s">&quot;/properties&quot;</span>)</div>
<div class="ln" style="left:0;top:640px;color:#606366">57</div>
<div class="row" style="left:206px;top:640px"><span class="k">public</span> QueryPropertiesResponse <span class="u">queryProperties</span>(String deviceId<span class="k">,</span> String codes) {</div>
<div class="ln" style="left:0;top:684px;color:#606366">58</div>
<div class="row" style="left:206px;top:684px">    <span class="k">return</span> <span class="f">deviceService</span>.queryProperties(deviceId<span class="k">,</span> codes)<span class="k">;</span></div>
<div class="ln" style="left:0;top:728px;color:#606366">59</div>
<div class="row" style="left:206px;top:728px">}</div>
<div class="ln" style="left:0;top:772px;color:#606366">60</div>
<div class="row" style="left:206px;top:772px"></div>
<svg style="left:210px;top:814px" width="16" height="32"><circle cx="8" cy="20.3" r="4" fill="#8e9ba3"/><path d="M0 30 Q0 25.5 8 25.5 Q16 25.5 16 30Z" fill="#8e9ba3"/></svg>
<svg style="left:235px;top:814px" width="48" height="40" fill="none" stroke="#8a8a8a" stroke-width="2.1" stroke-linecap="butt"><path d="M2 13 V34.5 M2 13.5 H7.5 L4.8 21.5 Q8.5 25 7.8 27.8 Q7 30 4.5 30"/><path d="M8.5 16.5 H21.5 M14.5 12 L9.5 24 H21 M15.5 20 V33.5 L12 33 M12.5 27 L8.5 32.5 M17.5 27 L21 32.5"/><path d="M29 12 V34 M24 17.5 H32.5 M29 19 L24.5 27.5 M30 19 L33 24"/><path d="M39.5 12 V34 M34 17.5 H46 M39 20 L33.5 29 M40 20 L46 29"/></svg>
<div class="ab" style="left:144px;top:812px;width:1873px;height:2px;background:#4f4f4f"></div>
<div class="ln" style="left:0;top:860px;color:#606366">61</div>
<div class="row" style="left:206px;top:860px"><span class="an">@PostMapping</span>(<span class="s">&quot;/properties/issue/{device_id}&quot;</span>)</div>
<div class="ln" style="left:0;top:904px;color:#606366">62</div>
<div class="row" style="left:206px;top:904px"><span class="k">public</span> IssuePropertiesResponse <span class="u">issueProperties</span>(<span class="an">@PathVariable</span>(<span class="s">&quot;device_id&quot;</span>) String deviceId<span class="k">,</span></div>
<div class="ln" style="left:0;top:948px;color:#606366">63</div>
<div class="row" style="left:206px;top:948px">                                               String properties) {</div>
<div class="ln" style="left:0;top:992px;color:#606366">64</div>
<div class="row" style="left:206px;top:992px">    <span class="k">return</span> <span class="f">deviceService</span>.issueProperties(deviceId<span class="k">,</span> properties)<span class="k">;</span></div>
<svg style="left:122px;top:-13px" width="20" height="26"><path d="M2 23 H18 V10 L10 2 L2 10Z" fill="#2b2b2b" stroke="#5c5c5c" stroke-width="2"/><path d="M5 15 H15" stroke="#5c5c5c" stroke-width="2"/></svg>
<svg style="left:122px;top:124px" width="20" height="26"><path d="M2 2 H18 V15 L10 23 L2 15Z" fill="#2b2b2b" stroke="#5c5c5c" stroke-width="2"/><path d="M5 9.5 H15" stroke="#5c5c5c" stroke-width="2"/></svg>
<svg style="left:122px;top:207px" width="20" height="26"><path d="M2 23 H18 V10 L10 2 L2 10Z" fill="#2b2b2b" stroke="#5c5c5c" stroke-width="2"/><path d="M5 15 H15" stroke="#5c5c5c" stroke-width="2"/></svg>
<svg style="left:122px;top:388px" width="20" height="26"><path d="M2 2 H18 V15 L10 23 L2 15Z" fill="#2b2b2b" stroke="#5c5c5c" stroke-width="2"/><path d="M5 9.5 H15" stroke="#5c5c5c" stroke-width="2"/></svg>
<svg style="left:122px;top:471px" width="20" height="26"><path d="M2 23 H18 V10 L10 2 L2 10Z" fill="#2b2b2b" stroke="#5c5c5c" stroke-width="2"/><path d="M5 15 H15" stroke="#5c5c5c" stroke-width="2"/></svg>
<svg style="left:122px;top:652px" width="20" height="26"><path d="M2 2 H18 V15 L10 23 L2 15Z" fill="#2b2b2b" stroke="#5c5c5c" stroke-width="2"/><path d="M5 9.5 H15" stroke="#5c5c5c" stroke-width="2"/></svg>
<svg style="left:122px;top:735px" width="20" height="26"><path d="M2 23 H18 V10 L10 2 L2 10Z" fill="#2b2b2b" stroke="#5c5c5c" stroke-width="2"/><path d="M5 15 H15" stroke="#5c5c5c" stroke-width="2"/></svg>
<svg style="left:122px;top:960px" width="20" height="26"><path d="M2 2 H18 V15 L10 23 L2 15Z" fill="#2b2b2b" stroke="#5c5c5c" stroke-width="2"/><path d="M5 9.5 H15" stroke="#5c5c5c" stroke-width="2"/></svg>
<div class="ab" style="left:202px;top:154px;width:1px;height:44px;background:#3b3b3b"></div>
<div class="ab" style="left:202px;top:418px;width:1px;height:44px;background:#3b3b3b"></div>
<div class="ab" style="left:202px;top:682px;width:1px;height:44px;background:#3b3b3b"></div>
<div class="ab" style="left:202px;top:990px;width:1px;height:44px;background:#3b3b3b"></div>
<div class="ab" style="left:202px;top:946px;width:1px;height:44px;background:#3b3b3b"></div>
<svg style="left:162px;top:420px" width="21" height="29"><path d="M10.5 0 A10 10 0 0 1 20.5 10 Q20.5 15 16 19 V20 H5 V19 Q0.5 15 0.5 10 A10 10 0 0 1 10.5 0Z" fill="#f0a732"/><path d="M4 22.5 H17 M5 26.5 H16" stroke="#bbbbbb" stroke-width="2"/></svg>
<div class="ab" style="left:2017px;top:48px;width:2px;height:1000px;background:#4a4a4a"></div>
<div class="ab" style="left:2017px;top:0;width:2px;height:5px;background:#4a4a4a"></div>
<svg style="left:1988px;top:14px" width="25" height="23"><path d="M12 0 L24 22 H0Z" fill="#c59a1e"/><rect x="10.5" y="7" width="3" height="7" fill="#2b2b2b"/><rect x="10.5" y="16" width="3" height="3.5" fill="#2b2b2b"/></svg>
<div class="t" style="left:2019px;top:16px;font-size:22px;color:#bbbbbb">21</div>
<svg style="left:2062px;top:20px" width="18" height="12"><path d="M1 10 L8.5 2 L16 10" fill="none" stroke="#afb1b3" stroke-width="2.4"/></svg>
</div>
<div class="ab" style="left:798px;top:446px;width:1109px;height:232px;border:6px solid #e8432a;border-radius:12px"></div>
<div class="ab" style="left:18px;top:1158px;width:2748px;height:146px;background:#3c3f41"></div>
<div class="ab" style="left:18px;top:1157px;width:2748px;height:2px;background:#2f3032"></div>
<div class="t" style="left:30px;top:1174px;font-size:27.6px;color:#bbbbbb">Debug:</div>
<svg style="left:158px;top:1170px" width="36" height="36"><g transform="translate(2 8)"><path d="M3.8 -6 H28 V14 H25.4 V-2.2 H3.8Z" fill="#8a959c"/><rect x="-1.2" y="-1.2" width="26.4" height="22.4" fill="#3c3f41"/><rect x="0" y="0" width="24" height="20" fill="#8a959c"/><rect x="2.1" y="4.3" width="19.7" height="13.5" fill="#333537"/><rect x="4" y="6" width="16" height="10" fill="#3d88a6"/><circle cx="26.2" cy="20.2" r="4.3" fill="#00ee00" stroke="#1e1e1e" stroke-width="1.2"/></g></svg>
<div class="t" style="left:199px;top:1174px;font-size:27.6px;color:#bbbbbb">TuyaCampusDemoApplication</div>
<svg style="left:584px;top:1181px" width="16" height="16"><path d="M1 1 L15 15 M15 1 L1 15" stroke="#7d8083" stroke-width="1.8"/></svg>
<div class="ab" style="left:134px;top:1207.5px;width:488px;height:6px;border-radius:3px;background:#767b83"></div>
<svg style="left:2722px;top:1172px" width="28" height="28"><g transform="translate(14 14)"><circle r="9.4" fill="#afb1b3"/><rect x="-3.2" y="-13" width="6.4" height="6" fill="#afb1b3" transform="rotate(0)"/><rect x="-3.2" y="-13" width="6.4" height="6" fill="#afb1b3" transform="rotate(60)"/><rect x="-3.2" y="-13" width="6.4" height="6" fill="#afb1b3" transform="rotate(120)"/><rect x="-3.2" y="-13" width="6.4" height="6" fill="#afb1b3" transform="rotate(180)"/><rect x="-3.2" y="-13" width="6.4" height="6" fill="#afb1b3" transform="rotate(240)"/><rect x="-3.2" y="-13" width="6.4" height="6" fill="#afb1b3" transform="rotate(300)"/><circle r="4.6" fill="#3c3f41"/></g></svg>
<div class="ab" style="left:18px;top:1213px;width:2748px;height:2px;background:#323436"></div>
<div class="ab" style="left:75px;top:1215px;width:2px;height:89px;background:#323436"></div>
<div class="t" style="left:103px;top:1232px;font-size:22.7px;color:#bbbbbb">Debugger</div>
<div class="t" style="left:254px;top:1232px;font-size:22.4px;color:#bbbbbb">Console</div>
<div class="ab" style="left:228px;top:1266px;width:136px;height:4px;background:#6f747a"></div>
<svg style="left:33px;top:1227px" width="30" height="32"><path d="M18 9 H13 A9.5 9.5 0 0 0 13 28 H13.5" fill="none" stroke="#499c54" stroke-width="4.2"/><path d="M17.5 1 L28 9 L17.5 17Z" fill="#499c54"/><rect x="15" y="19" width="10" height="10" fill="#afb1b3"/></svg>
<svg style="left:32px;top:1279px" width="30" height="30"><path d="M3 27 L16 14" stroke="#afb1b3" stroke-width="5.5"/><circle cx="20" cy="10" r="8.5" fill="#afb1b3"/><path d="M17 7 L23 1 L29 7 L23 13Z" fill="#3c3f41"/></svg>
<svg style="left:376px;top:1229px" width="26" height="24"><rect x="0" y="1" width="24" height="4" fill="#5c5e60"/><rect x="0" y="9" width="24" height="6" fill="#5c5e60"/><rect x="0" y="19" width="24" height="4" fill="#5c5e60"/></svg>
<div class="ab" style="left:420px;top:1221px;width:2px;height:40px;background:#4b4e50"></div>
<svg style="left:441px;top:1226px" width="28" height="28"><path d="M1.5 15.5 L11 6 L19 14" fill="none" stroke="#5c5e60" stroke-width="3.2"/><path d="M13.5 17.5 L24.5 17.5 L24.5 6.5Z" fill="#5c5e60"/><rect x="1.5" y="22" width="23.5" height="4" fill="#5c5e60"/></svg>
<svg style="left:494px;top:1226px" width="28" height="28"><rect x="10.5" y="0" width="4" height="13" fill="#5c5e60"/><path d="M3 11 H22 L12.5 20Z" fill="#5c5e60"/><rect x="1" y="22" width="24" height="4" fill="#5c5e60"/></svg>
<svg style="left:546px;top:1226px" width="28" height="28"><rect x="10.5" y="0" width="4" height="13" fill="#5c5e60"/><path d="M3 11 H22 L12.5 20Z" fill="#5c5e60"/><rect x="1" y="22" width="24" height="4" fill="#5c5e60"/></svg>
<svg style="left:598px;top:1226px" width="28" height="28"><path d="M3 10 H22 L12.5 1Z" fill="#5c5e60"/><rect x="10.5" y="9" width="4" height="11" fill="#5c5e60"/><rect x="1" y="22" width="24" height="4" fill="#5c5e60"/></svg>
<svg style="left:649px;top:1226px" width="30" height="30"><path d="M2 2 L11 11" stroke="#5c5e60" stroke-width="3.5"/><path d="M3 15 H15 V3Z" fill="#5c5e60"/><path d="M17 9 H23 M17 24 H23 M20 9 V24" stroke="#5c5e60" stroke-width="1.8"/></svg>
<div class="ab" style="left:695px;top:1221px;width:2px;height:40px;background:#4b4e50"></div>
<svg style="left:716px;top:1227px" width="26" height="26"><rect x="0" y="0" width="24" height="24" fill="#5c5e60"/><rect x="3" y="4" width="18" height="3" fill="#3c3f41"/><g fill="#3c3f41"><rect x="4" y="10" width="4" height="3"/><rect x="10" y="10" width="4" height="3"/><rect x="16" y="10" width="4" height="3"/><rect x="4" y="16" width="4" height="3"/><rect x="10" y="16" width="4" height="3"/><rect x="16" y="16" width="4" height="3"/></g></svg>
<svg style="left:768px;top:1229px" width="26" height="24"><path d="M0 2.5 H11 M17 2.5 H24 M0 11 H8 M14 11 H24 M0 19.5 H5 M11 19.5 H24" stroke="#5c5e60" stroke-width="3.6"/><path d="M18 0 Q13 4 12 12 Q11 19 6 23" fill="none" stroke="#5c5e60" stroke-width="1.8"/></svg>
<div class="ab" style="left:77px;top:1270px;width:2689px;height:34px;background:#3c3f41"></div>
<div class="ab" style="left:133px;top:1270px;width:2633px;height:34px;background:#2b2b2b"></div>
<svg style="left:93px;top:1288px" width="22" height="20"><path d="M11 2 V20 M3 10 L11 2 L19 10" fill="none" stroke="#afb1b3" stroke-width="2.6"/></svg>
<div class="t mono" style="left:157px;top:1270px;font-size:26px;color:#bbbbbb;transform:scaleY(1.12);transform-origin:0 3px">2023-06-04 21:31:56.370  INFO 12594 --- [nio-8080-exec-2] c.t.c.o.api.header.TuyaHeaderProcessor   : URL PATH: /v2.0/cloud/space/creation</div>
</body></html>
